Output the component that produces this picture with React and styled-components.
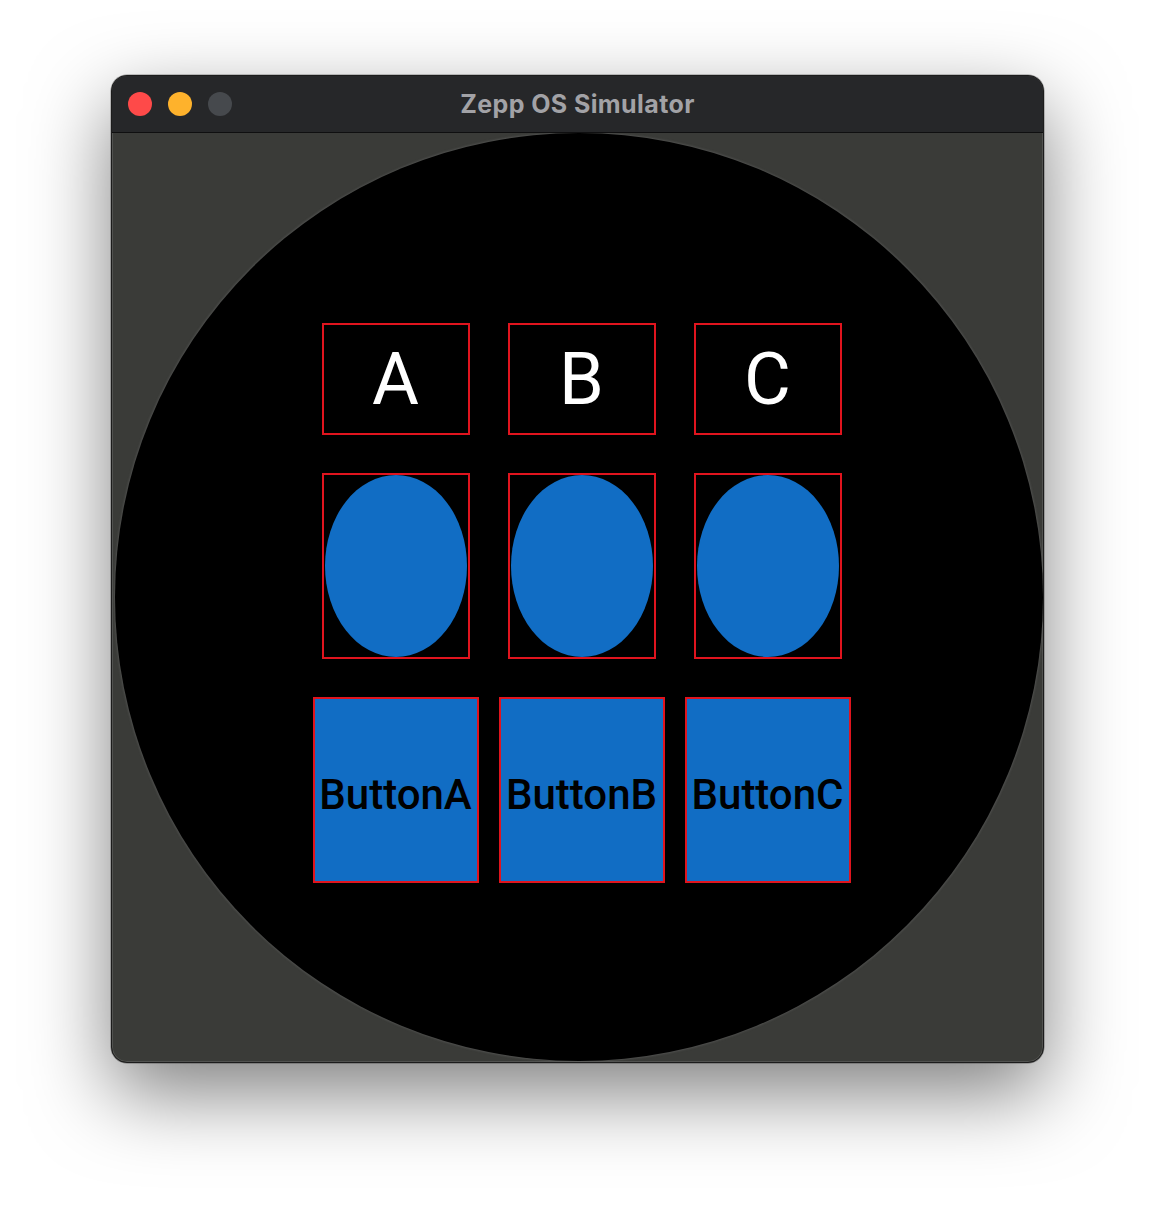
import React from 'react';
import styled, { createGlobalStyle } from 'styled-components';

const GlobalStyle = createGlobalStyle`
  html, body {
    margin: 0;
    padding: 0;
    background: #ffffff;
  }
  body {
    font-family: Roboto, "Liberation Sans", sans-serif;
  }
`;

const labels = ['A', 'B', 'C'];

function App() {
  return (
    <>
      <GlobalStyle />
      <Desktop>
        <Window>
          <TitleBar>
            <Lights>
              <Light color="#fe4a49" />
              <Light color="#feb22c" />
              <Light color="#46494d" />
            </Lights>
            <Title>Zepp OS Simulator</Title>
          </TitleBar>
          <Screen>
            <Watch>
              <Grid>
                {labels.map((l) => (
                  <Cell key={`t${l}`}>
                    <TextBox>{l}</TextBox>
                  </Cell>
                ))}
                {labels.map((l) => (
                  <Cell key={`c${l}`}>
                    <ShapeBox>
                      <Ellipse />
                    </ShapeBox>
                  </Cell>
                ))}
                {labels.map((l) => (
                  <Button key={`b${l}`}>Button{l}</Button>
                ))}
              </Grid>
            </Watch>
          </Screen>
        </Window>
      </Desktop>
    </>
  );
}

export default App;

const Desktop = styled.div`
  padding: 75px 0 0 111px;
  height: 1212px;
  box-sizing: border-box;
`;

const Window = styled.div`
  width: 933px;
  height: 988px;
  border-radius: 16px;
  overflow: hidden;
  background: #3a3b38;
  border: 1px solid #1c1c1c;
  box-sizing: border-box;
  display: flex;
  flex-direction: column;
  box-shadow: 0 30px 80px rgba(0, 0, 0, 0.5), 0 0 0 0.5px rgba(0, 0, 0, 0.4),
    inset 0 0 0 1px rgba(255, 255, 255, 0.12);
`;

const TitleBar = styled.div`
  position: relative;
  height: 56px;
  flex: none;
  background: #262729;
  border-bottom: 1px solid #0f0f10;
  display: flex;
  align-items: center;
  justify-content: center;
`;

const Lights = styled.div`
  position: absolute;
  left: 16px;
  top: 16px;
  display: flex;
  gap: 16px;
`;

const Light = styled.span`
  width: 24px;
  height: 24px;
  border-radius: 50%;
  background: ${(p) => p.color};
`;

const Title = styled.div`
  font-family: Inter, "Liberation Sans", sans-serif;
  font-weight: 700;
  font-size: 25px;
  color: #a2a2a6;
  letter-spacing: 0.4px;
`;

const Screen = styled.div`
  flex: 1;
  display: flex;
  justify-content: center;
  align-items: flex-start;
`;

const Watch = styled.div`
  width: 928px;
  height: 928px;
  margin-left: 2px;
  border-radius: 50%;
  background: #000000;
  box-shadow: 0 0 2px 1px rgba(120, 120, 120, 0.35);
  display: flex;
  justify-content: center;
  padding: 190px 0 0 6px;
  box-sizing: border-box;
`;

const Grid = styled.div`
  display: grid;
  grid-template-columns: repeat(3, 166px);
  grid-template-rows: 112px 186px 186px;
  column-gap: 20px;
  row-gap: 38px;
  align-content: start;
`;

const Cell = styled.div`
  display: flex;
  justify-content: center;
`;

const Frame = styled.div`
  width: 148px;
  border: 2px solid #e0141e;
  box-sizing: border-box;
`;

const TextBox = styled(Frame)`
  height: 112px;
  display: flex;
  align-items: center;
  justify-content: center;
  color: #ffffff;
  font-family: Roboto, sans-serif;
  font-size: 72px;
  line-height: 1;
  padding-top: 2px;
`;

const ShapeBox = styled(Frame)`
  height: 186px;
  padding: 0 1px;
  display: flex;
`;

const Ellipse = styled.div`
  flex: 1;
  border-radius: 50%;
  background: #116dc4;
`;

const Button = styled.div`
  height: 186px;
  border: 2px solid #e0141e;
  box-sizing: border-box;
  background: #116dc4;
  display: flex;
  align-items: center;
  justify-content: center;
  color: #000000;
  font-family: Roboto, sans-serif;
  font-weight: 500;
  font-size: 42px;
  white-space: nowrap;
  overflow: visible;
  padding-top: 8px;
`;
